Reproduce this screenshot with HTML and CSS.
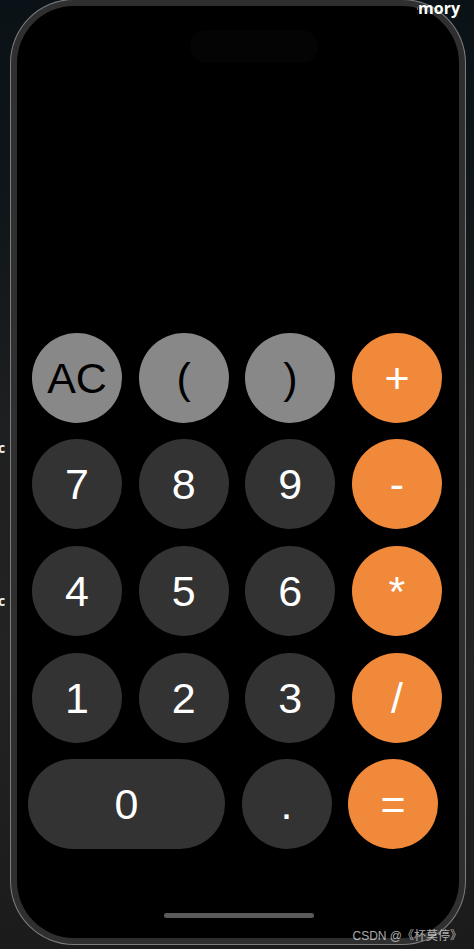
FILE: index.html
```html
<!DOCTYPE html>
<html lang="zh">
<head>
<meta charset="utf-8">
<title>Calculator</title>
<link rel="stylesheet" href="styles.css">
</head>
<body>
<div class="bg-label"><span>Memory</span></div>
<div class="bg-c bg-c1">c</div>
<div class="bg-c bg-c2">c</div>
<div class="phone">
  <div class="bezel">
    <div class="screen">
      <div class="island"></div>
      <div class="spacer"></div>
      <div class="keypad">
        <button class="key light">AC</button>
        <button class="key light">(</button>
        <button class="key light">)</button>
        <button class="key orange">+</button>
        <button class="key dark">7</button>
        <button class="key dark">8</button>
        <button class="key dark">9</button>
        <button class="key orange">-</button>
        <button class="key dark">4</button>
        <button class="key dark">5</button>
        <button class="key dark">6</button>
        <button class="key orange">*</button>
        <button class="key dark">1</button>
        <button class="key dark">2</button>
        <button class="key dark">3</button>
        <button class="key orange">/</button>
      </div>
      <div class="lastrow">
        <button class="key dark zero">0</button>
        <button class="key dark">.</button>
        <button class="key orange">=</button>
      </div>
      <div class="home"></div>
    </div>
  </div>
</div>
<div class="watermark">CSDN @《杯莫停》</div>
</body>
</html>
```
FILE: styles.css
```css
html, body {
  margin: 0;
  padding: 0;
}
body {
  width: 474px;
  height: 949px;
  overflow: hidden;
  position: relative;
  background: linear-gradient(to bottom, #0a1217 0%, #101619 22%, #1e1f20 45%, #232323 70%, #1b1b1b 100%);
  font-family: "Liberation Sans", Arial, sans-serif;
}
.bg-label {
  position: absolute;
  top: -3px;
  left: 417px;
  width: 57px;
  height: 22px;
  overflow: hidden;
  z-index: 2;
}
.bg-label span {
  position: absolute;
  right: 14px;
  top: 0;
  color: #fff;
  font-family: "Open Sans", sans-serif;
  font-weight: 700;
  font-size: 16px;
  line-height: 22px;
}
.bg-c {
  position: absolute;
  left: -2px;
  color: #eee;
  font-family: "Open Sans", sans-serif;
  font-weight: 700;
  font-size: 14px;
}
.bg-c1 { top: 438px; }
.bg-c2 { top: 591px; }
.phone {
  position: relative;
  z-index: 1;
  margin-left: 10px;
  margin-top: -1px;
  width: 456px;
  height: 946px;
  box-sizing: border-box;
  padding: 1px;
  border-radius: 64px;
  background: #7d7d7d;
}
.bezel {
  height: 100%;
  box-sizing: border-box;
  padding: 6px;
  border-radius: 63px;
  background: #2f2f2f;
}
.screen {
  height: 100%;
  box-sizing: border-box;
  border-radius: 57px;
  background: #000;
  display: flex;
  flex-direction: column;
  padding: 0 0 20px 15px;
}
.island {
  align-self: flex-start;
  margin: 24px 0 0 158px;
  width: 128px;
  height: 33px;
  border-radius: 17px;
  background: #040404;
}
.spacer {
  flex: 1;
}
.keypad {
  display: grid;
  grid-template-columns: repeat(4, 90px);
  grid-auto-rows: 90px;
  column-gap: 16.67px;
  row-gap: 16.67px;
}
.lastrow {
  display: flex;
  gap: 16.5px;
  margin-top: 16.5px;
  margin-left: -4px;
}
.key {
  width: 90px;
  height: 90px;
  border: none;
  border-radius: 45px;
  padding: 0;
  margin: 0;
  font-family: "Liberation Sans", Arial, sans-serif;
  font-size: 43px;
  font-weight: 400;
  line-height: 90px;
  display: flex;
  align-items: center;
  justify-content: center;
}
.light {
  background: #888888;
  color: #000;
}
.dark {
  background: #333333;
  color: #fff;
}
.orange {
  background: #f0893a;
  color: #fff;
}
.zero {
  width: 197px;
}
.home {
  align-self: flex-start;
  margin: 64px 0 0 132px;
  width: 150px;
  height: 5px;
  border-radius: 3px;
  background: #5a5a5a;
}
.watermark {
  position: absolute;
  right: 12px;
  bottom: 6px;
  z-index: 2;
  color: rgba(235, 235, 235, 0.72);
  font-family: "Liberation Sans", "Noto Sans CJK SC", sans-serif;
  font-size: 12px;
  line-height: 14px;
}
```
